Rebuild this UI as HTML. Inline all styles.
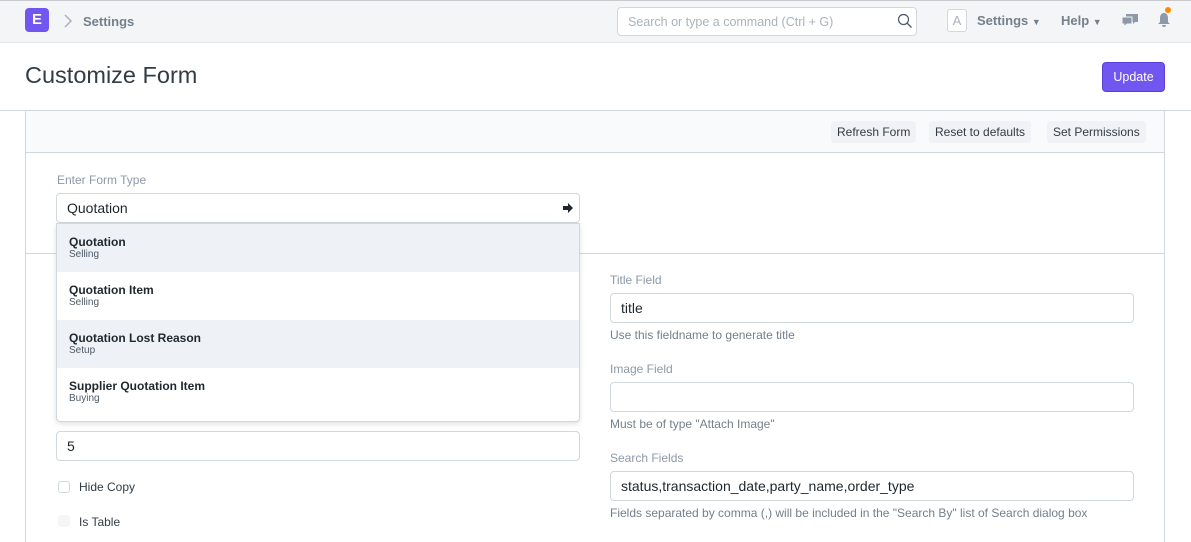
<!DOCTYPE html>
<html><head><style>
*{box-sizing:border-box;margin:0;padding:0}
body{width:1191px;height:542px;overflow:hidden;background:#fff;font-family:"Liberation Sans",sans-serif;color:#1f272e;position:relative}
.abs{position:absolute}
.nav{left:0;top:0;width:1191px;height:43px;background:#f4f5f7;border-top:1px solid #c9c9cd;border-bottom:1px solid #e2e6e9}
.logo{left:25px;top:8px;width:24px;height:24px;background:#7157f0;border-radius:4px;color:#fff;font-weight:bold;font-size:15px;text-align:center;line-height:24px}
.lbl{font-size:12px;color:#8d99a6}
.inp{border:1px solid #d1d8dd;border-radius:4px;background:#fff;font-size:14px;padding-left:10px;line-height:28px;height:30px}
.btn{background:#f0f2f5;border-radius:3px;font-size:12px;color:#333c44;height:22px;line-height:22px;padding:0 6px}
.item{left:57px;width:522px;height:48px;padding:11px 12px}
.item b{font-size:12px;display:block;color:#1f272e}
.item span{font-size:10px;color:#4c5a67;display:block}
.help{font-size:12px;color:#74808b}
.cb{width:12px;height:12px;border:1px solid #d1d8dd;border-radius:3px}
</style></head><body>
<div class="abs nav"></div>
<div class="abs logo">E</div>
<svg class="abs" style="left:63px;top:14px" width="10" height="14"><path d="M2 1l6 6-6 6" stroke="#a9b3bd" stroke-width="1.5" fill="none"/></svg>
<div class="abs" style="left:83px;top:14px;font-size:13px;font-weight:bold;color:#74808b">Settings</div>
<div class="abs" style="left:617px;top:7px;width:300px;height:29px;border:1px solid #d1d8dd;border-radius:4px;background:#fff;font-size:12.5px;color:#a9b3bd;padding:7px 10px">Search or type a command (Ctrl + G)</div>
<svg class="abs" style="left:897px;top:13px" width="16" height="16"><circle cx="6.5" cy="6.5" r="5" stroke="#4c5a67" stroke-width="1.2" fill="none"/><path d="M10 10l4.5 4.5" stroke="#4c5a67" stroke-width="1.3"/></svg>
<div class="abs" style="left:947px;top:9px;width:20px;height:23px;border:1px solid #d1d8dd;border-radius:3px;background:#fff;color:#a9b3bd;font-size:13px;text-align:center;line-height:21px">A</div>
<div class="abs" style="left:977px;top:13px;font-size:13px;font-weight:bold;color:#74808b">Settings <span style="font-size:9px">▼</span></div>
<div class="abs" style="left:1061px;top:13px;font-size:13px;font-weight:bold;color:#74808b">Help <span style="font-size:9px">▼</span></div>
<svg class="abs" style="left:1121px;top:12px" width="18" height="16"><path d="M5 2h12v8h-3l-2 2v-2H5z" fill="#8d99a6"/><path d="M1 5h10v7H6l-3 3v-3H1z" fill="#8d99a6" stroke="#f4f5f7" stroke-width="1"/></svg>
<svg class="abs" style="left:1157px;top:12px" width="14" height="16"><path d="M7 1c-3 0-4 3-4 5v4l-2 2h12l-2-2V6c0-2-1-5-4-5zM5 13a2 2 0 004 0z" fill="#8d99a6"/></svg>
<div class="abs" style="left:1165px;top:7px;width:6px;height:6px;border-radius:50%;background:#ff8a00"></div>
<div class="abs" style="left:25px;top:62px;font-size:23.5px;color:#333c44">Customize Form</div>
<div class="abs" style="left:1102px;top:62px;width:63px;height:30px;background:#7157f0;border:1px solid #5a3fd8;border-radius:4px;color:#fff;font-size:12.5px;text-align:center;line-height:28px">Update</div>
<div class="abs" style="left:0;top:110px;width:1191px;height:1px;background:#d1d8dd"></div>
<div class="abs" style="left:25px;top:111px;width:1140px;height:431px;border-left:1px solid #d1d8dd;border-right:1px solid #d1d8dd"></div>
<div class="abs" style="left:26px;top:111px;width:1138px;height:42px;background:#f9fafb;border-bottom:1px solid #d1d8dd"></div>
<div class="abs btn" style="left:831px;top:121px">Refresh Form</div>
<div class="abs btn" style="left:929px;top:121px">Reset to defaults</div>
<div class="abs btn" style="left:1047px;top:121px">Set Permissions</div>
<div class="abs" style="left:26px;top:253px;width:1138px;height:1px;background:#d1d8dd"></div>
<div class="abs lbl" style="left:57px;top:173px">Enter Form Type</div>
<div class="abs inp" style="left:56px;top:193px;width:524px">Quotation</div>
<svg class="abs" style="left:562px;top:202px" width="12" height="12"><path d="M1 4h5V1l5 5-5 5V8H1z" fill="#1f272e"/></svg>
<div class="abs inp" style="left:56px;top:431px;width:524px">5</div>
<div class="abs cb" style="left:58px;top:481px"></div>
<div class="abs" style="left:79px;top:480px;font-size:12px;color:#333c44">Hide Copy</div>
<div class="abs cb" style="left:58px;top:515px;background:#f4f5f7;border-color:#f4f5f7"></div>
<div class="abs" style="left:79px;top:515px;font-size:12px;color:#333c44">Is Table</div>
<div class="abs" style="left:56px;top:223px;width:524px;height:199px;background:#fff;border:1px solid #d1d8dd;border-radius:0 0 4px 4px;box-shadow:0 2px 6px rgba(0,0,0,.12)"></div>
<div class="abs item" style="top:224px;background:#eef1f5"><b>Quotation</b><span>Selling</span></div>
<div class="abs item" style="top:272px"><b>Quotation Item</b><span>Selling</span></div>
<div class="abs item" style="top:320px;background:#eef1f5"><b>Quotation Lost Reason</b><span>Setup</span></div>
<div class="abs item" style="top:368px"><b>Supplier Quotation Item</b><span>Buying</span></div>
<div class="abs lbl" style="left:610px;top:273px">Title Field</div>
<div class="abs inp" style="left:610px;top:293px;width:524px">title</div>
<div class="abs help" style="left:610px;top:328px">Use this fieldname to generate title</div>
<div class="abs lbl" style="left:610px;top:362px">Image Field</div>
<div class="abs inp" style="left:610px;top:382px;width:524px"></div>
<div class="abs help" style="left:610px;top:417px">Must be of type "Attach Image"</div>
<div class="abs lbl" style="left:610px;top:451px">Search Fields</div>
<div class="abs inp" style="left:610px;top:471px;width:524px">status,transaction_date,party_name,order_type</div>
<div class="abs help" style="left:610px;top:506px">Fields separated by comma (,) will be included in the "Search By" list of Search dialog box</div>
</body></html>
